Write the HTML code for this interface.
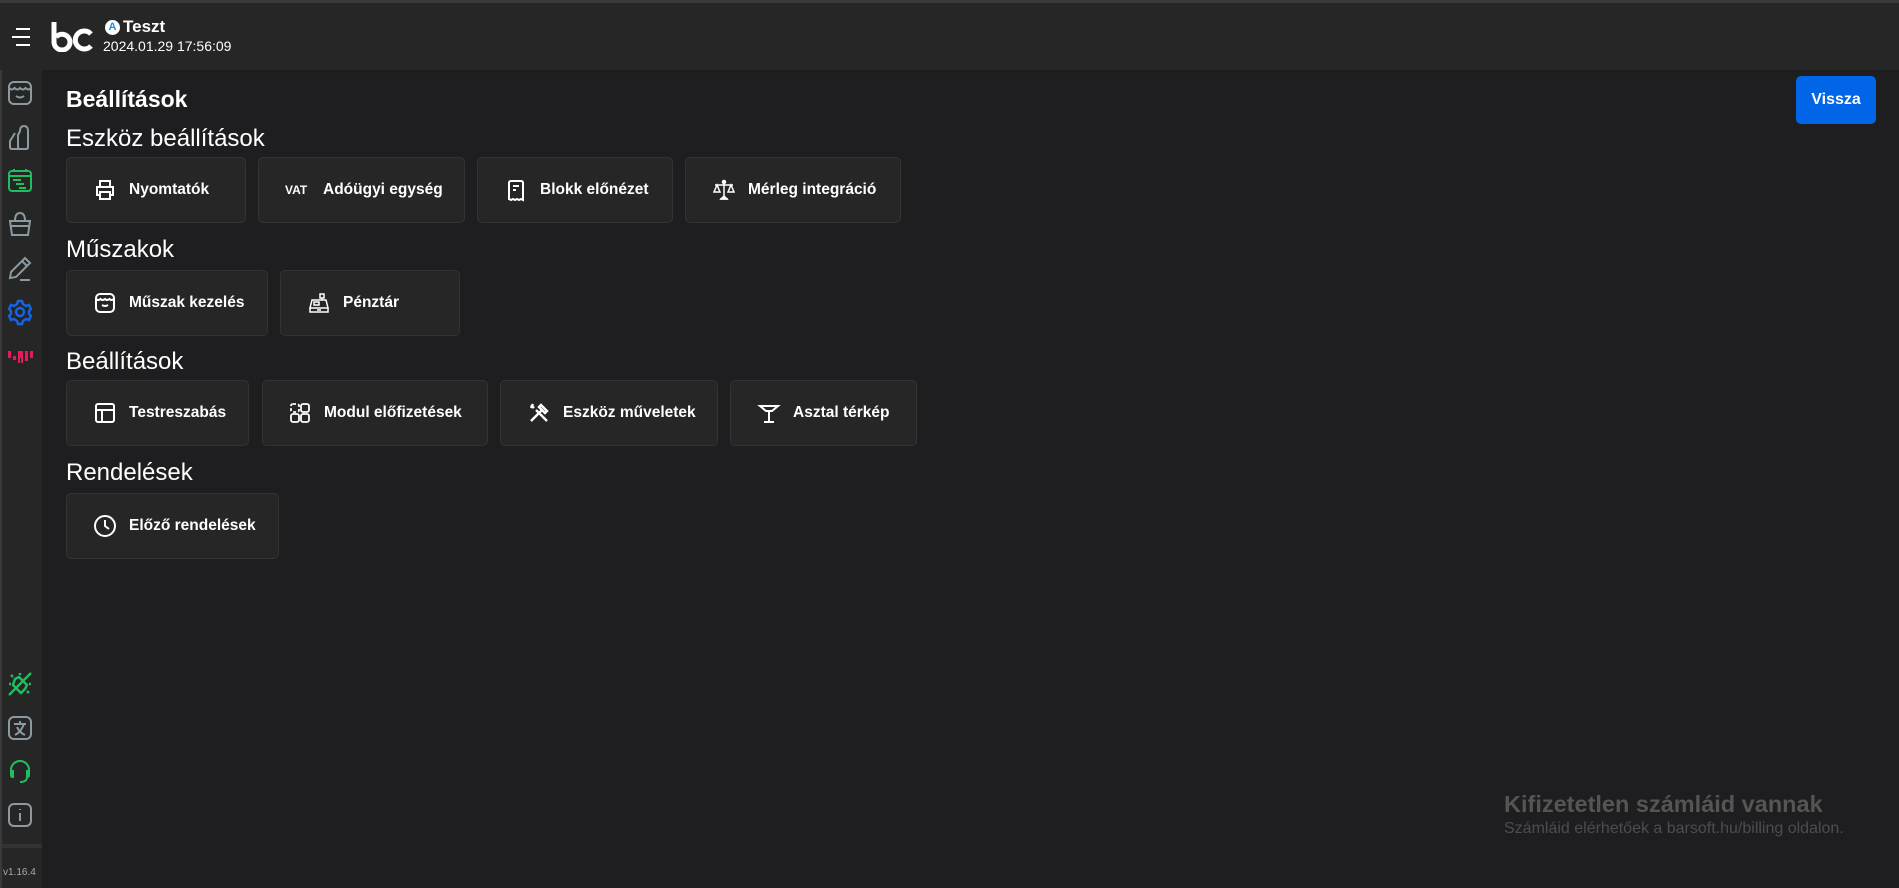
<!DOCTYPE html>
<html><head><meta charset="utf-8"><style>
*{box-sizing:border-box;margin:0;padding:0}
body{width:1899px;height:888px;background:#1e1e20;font-family:"Liberation Sans",sans-serif;color:#fff;position:relative;overflow:hidden}
.top{position:absolute;left:0;top:0;width:1899px;height:70px;background:#262626;border-top:3px solid #3a3a3a}
.side{position:absolute;left:0;top:70px;width:42px;height:818px;background:#262626;border-left:2px solid #3a3a3a}
.a{position:absolute}
.h{position:absolute;left:66px;font-size:24px;color:#fff}
.b{position:absolute;height:66px;background:#262626;border:1px solid #333;border-radius:5px;display:flex;align-items:center;padding-left:26px;font-size:15.5px;font-weight:bold;gap:12px}
.b svg{width:24px;height:24px;flex:none}
.si{position:absolute;left:6px;width:28px;height:28px}
</style></head><body>
<div class="top"></div>
<div class="side"></div>
<svg class="a" style="left:10px;top:26px" width="22" height="22" viewBox="0 0 22 22" stroke="#fff" stroke-width="2"><path d="M6 3h14M2 11h18M6 19h14"/></svg>
<svg class="a" style="left:51px;top:20px" width="44" height="32" viewBox="0 0 44 32"><path d="M3 2v20a8 8 0 0 0 16 0a8 8 0 0 0-14-5" fill="none" stroke="#fff" stroke-width="5"/><path d="M40 14a9 9 0 1 0 0 12" fill="none" stroke="#fff" stroke-width="5"/><circle cx="11" cy="22" r="3" fill="#262626"/></svg>
<div class="a" style="left:105px;top:20px;width:15px;height:15px;border-radius:50%;background:#fff;color:#1a8fe8;font-size:11px;font-weight:bold;text-align:center;line-height:15px">A</div>
<div class="a" style="left:123px;top:17px;font-size:17px;font-weight:bold">Teszt</div>
<div class="a" style="left:103px;top:38px;font-size:14px">2024.01.29 17:56:09</div>

<svg class="si" style="top:79px" viewBox="0 0 28 28" fill="none" stroke="#8a9aa0" stroke-width="2"><rect x="3" y="3" width="22" height="22" rx="5"/><path d="M3 9q3 3 5.5 0q3 3 5.5 0q3 3 5.5 0q3 3 5.5 0M10 17q4 3 8 0"/></svg>
<svg class="si" style="top:123px" viewBox="0 0 28 28" fill="none" stroke="#8a9aa0" stroke-width="2"><path d="M9 10l-5 8v6q0 2 2 2h8M14 8q0-5 4-5t4 5v16q0 2-2 2h-6q-2 0-2-2V12z"/></svg>
<svg class="si" style="top:166px" viewBox="0 0 28 28" fill="none" stroke="#1fbf5f" stroke-width="2"><rect x="3" y="5" width="22" height="20" rx="3"/><path d="M3 10h22M8 3v3M20 3v3M7 14h8M10 18h8M13 22h7"/></svg>
<svg class="si" style="top:210px" viewBox="0 0 28 28" fill="none" stroke="#8a9aa0" stroke-width="2"><path d="M4 11h20l-2 14H6zM9 11q0-8 5-8t5 8M4 16h20"/></svg>
<svg class="si" style="top:254px" viewBox="0 0 28 28" fill="none" stroke="#8a9aa0" stroke-width="2"><path d="M4 24l1-6L19 4l5 5L10 23zM16 7l5 5M14 26h10"/></svg>
<svg class="si" style="top:298px" viewBox="0 0 28 28" fill="none" stroke="#1565e6" stroke-width="2.4"><circle cx="14" cy="14" r="4"/><path d="M12 3h4l1 3 3 2 3-1 2 4-2 2v3l2 2-2 4-3-1-3 2-1 3h-4l-1-3-3-2-3 1-2-4 2-2v-3l-2-2 2-4 3 1 3-2z"/></svg>
<svg class="si" style="top:343px" viewBox="0 0 28 28" fill="#e8185a"><path d="M2 8h3v7H2zM7 13h3v4H7zM12 8h5v12h-2v-5h-1v5h-2zM19 8h3v10h-3zM24 8h3v7h-3z"/></svg>
<svg class="si" style="top:670px" viewBox="0 0 28 28" fill="none" stroke="#1fbf5f" stroke-width="2.4"><path d="M3 25L25 3M9 9l4-2 8 8-2 4-4 4-8-8zM5 5l2 2M23 23l-2-2M3 14h2M14 3v2M25 14h-2"/></svg>
<svg class="si" style="top:714px" viewBox="0 0 28 28" fill="none" stroke="#8a9aa0" stroke-width="2"><rect x="3" y="3" width="22" height="22" rx="5"/><path d="M8 10h12M14 7v3M18 10q-3 8-9 11M11 13q3 6 8 8"/></svg>
<svg class="si" style="top:757px" viewBox="0 0 28 28" fill="none" stroke="#1fbf5f" stroke-width="2"><path d="M5 16v-3a9 9 0 0 1 18 0v3M5 16q0-2 2-2v6q-2 0-2-2zM23 16q0-2-2-2v6q2 0 2-2zM21 20q0 5-7 5"/></svg>
<svg class="si" style="top:801px" viewBox="0 0 28 28" fill="none" stroke="#8a9aa0" stroke-width="2"><rect x="3" y="3" width="22" height="22" rx="5"/><path d="M14 12v8M14 8v1"/></svg>
<div class="a" style="left:2px;top:844px;width:40px;height:4px;background:#333"></div>
<div class="a" style="left:3px;top:867px;font-size:10px;color:#aaa">v1.16.4</div>

<div class="a" style="left:66px;top:86px;font-size:23px;font-weight:bold">Beállítások</div>
<div class="a" style="left:1796px;top:76px;width:80px;height:48px;background:#0065e6;border-radius:5px;font-size:16px;font-weight:bold;text-align:center;line-height:48px">Vissza</div>

<div class="h" style="top:125px">Eszköz beállítások</div>
<div class="b" style="left:66px;top:157px;width:180px"><svg viewBox="0 0 24 24" fill="none" stroke="#fff" stroke-width="2"><path d="M7 8V3h10v5M7 17H4V9h16v8h-3M7 14h10v7H7z"/></svg>Nyomtatók</div>
<div class="b" style="left:258px;top:157px;width:207px"><span style="font-size:12px;font-weight:bold;width:26px">VAT</span>Adóügyi egység</div>
<div class="b" style="left:477px;top:157px;width:196px"><svg viewBox="0 0 24 24" fill="none" stroke="#fff" stroke-width="2"><path d="M5 22V5q0-2 2-2h10q2 0 2 2v17l-2-1-2 1-2-1-2 1-2-1-2 1-2-1zM9 8h6M9 12h3"/></svg>Blokk előnézet</div>
<div class="b" style="left:685px;top:157px;width:216px"><svg viewBox="0 0 24 24" fill="none" stroke="#fff" stroke-width="1.5"><path d="M12 3v16M3 7h18M5 7l-3 7h6zM19 7l-3 7h6zM8 21h8"/><circle cx="12" cy="4" r="1.5" fill="#fff"/><path d="M9 21l3-3 3 3z" fill="#fff"/></svg>Mérleg integráció</div>

<div class="h" style="top:236px">Műszakok</div>
<div class="b" style="left:66px;top:270px;width:202px"><svg viewBox="0 0 24 24" fill="none" stroke="#fff" stroke-width="2"><rect x="3" y="3" width="18" height="18" rx="4"/><path d="M3 8q2 2 4.5 0q2 2 4.5 0q2 2 4.5 0q2 2 4.5 0M9 14q3 2 6 0"/></svg>Műszak kezelés</div>
<div class="b" style="left:280px;top:270px;width:180px"><svg viewBox="0 0 24 24" fill="none" stroke="#fff" stroke-width="1.5"><path d="M13 3h4v4h-4zM15 7v2M5 9h14l2 8H3zM3 17h18v4H3zM10 19h4M7 11h5v3H7z"/></svg>Pénztár</div>

<div class="h" style="top:348px">Beállítások</div>
<div class="b" style="left:66px;top:380px;width:183px"><svg viewBox="0 0 24 24" fill="none" stroke="#fff" stroke-width="2"><rect x="3" y="3" width="18" height="18" rx="2"/><path d="M3 9h18M9 9v12"/></svg>Testreszabás</div>
<div class="b" style="left:262px;top:380px;width:226px;padding-left:25px"><svg viewBox="0 0 24 24" fill="none" stroke="#fff" stroke-width="1.8"><rect x="3" y="3" width="8" height="8" rx="2" stroke-dasharray="3 2"/><rect x="13" y="3" width="8" height="8" rx="2"/><rect x="3" y="13" width="8" height="8" rx="2"/><rect x="13" y="13" width="8" height="8" rx="2"/></svg>Modul előfizetések</div>
<div class="b" style="left:500px;top:380px;width:218px"><svg viewBox="0 0 24 24" fill="none" stroke="#fff" stroke-width="2.4"><path d="M4 20L15 9M9 9L20 20M14 4l6 6-2 2-6-6zM4 4l3 3M6 3l-2 4"/></svg>Eszköz műveletek</div>
<div class="b" style="left:730px;top:380px;width:187px"><svg viewBox="0 0 24 24" fill="none" stroke="#fff" stroke-width="2"><path d="M3 5h18l-6 5H9zM12 10v10M7 21h10"/></svg>Asztal térkép</div>

<div class="h" style="top:459px">Rendelések</div>
<div class="b" style="left:66px;top:493px;width:213px"><svg viewBox="0 0 24 24" fill="none" stroke="#fff" stroke-width="2"><circle cx="12" cy="12" r="10"/><path d="M12 6v6l4 3"/></svg>Előző rendelések</div>

<div class="a" style="left:1504px;top:791px;font-size:23.5px;font-weight:bold;color:#555">Kifizetetlen számláid vannak</div>
<div class="a" style="left:1504px;top:820px;font-size:16px;color:#4d4d4d">Számláid elérhetőek a barsoft.hu/billing oldalon.</div>
</body></html>
